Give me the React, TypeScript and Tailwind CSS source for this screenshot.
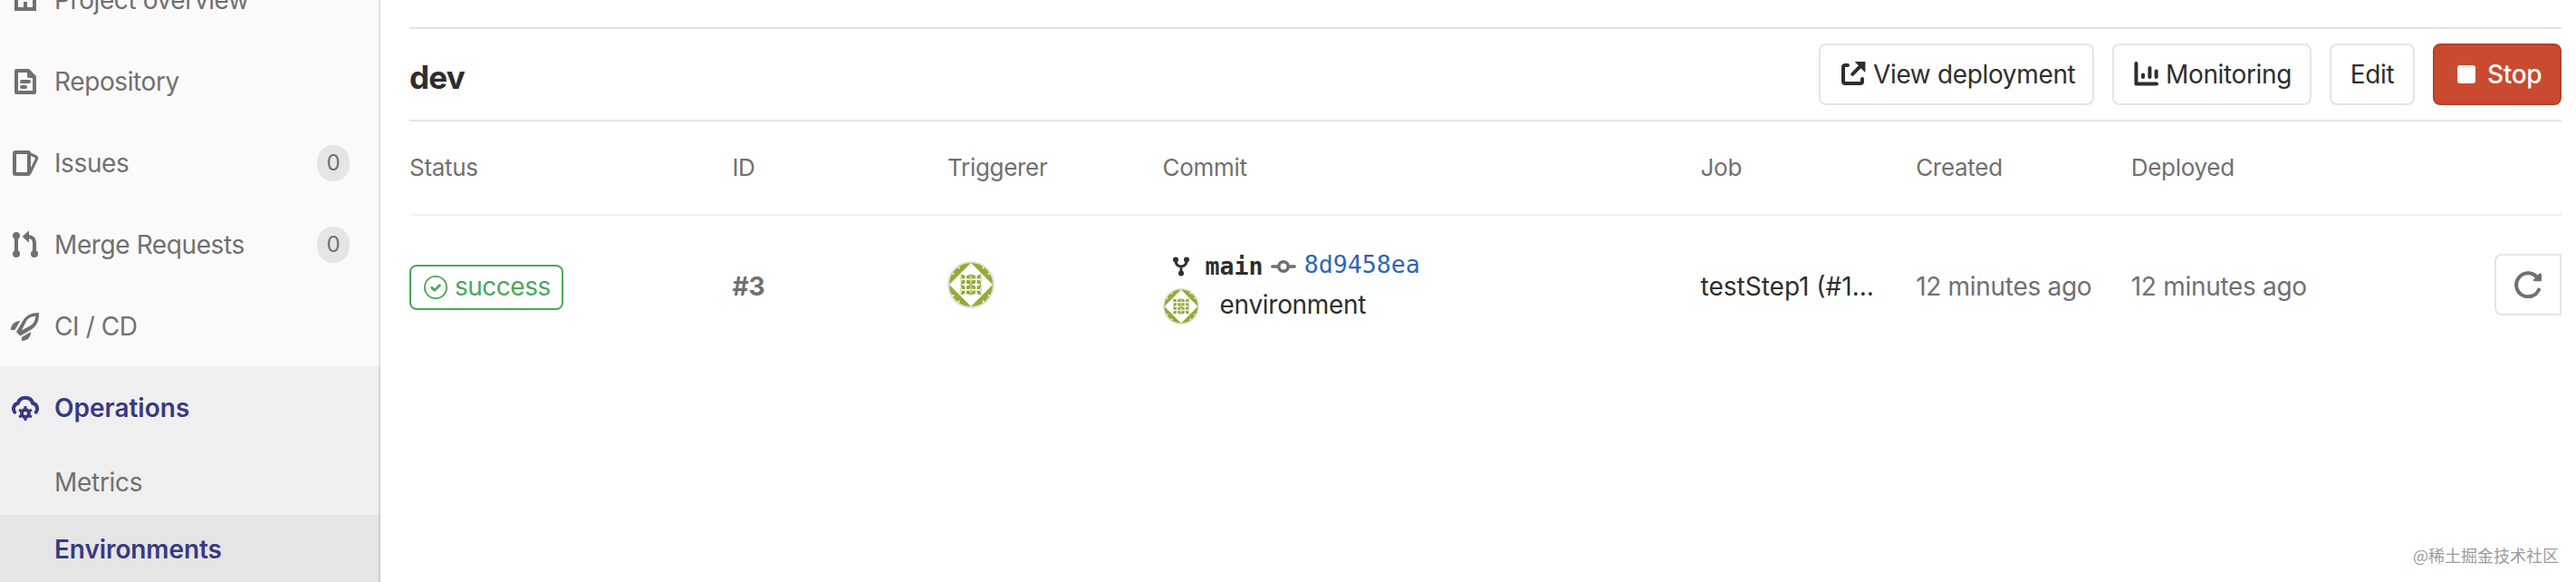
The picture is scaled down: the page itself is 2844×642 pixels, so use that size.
import React from 'react';

interface IconProps {
  className?: string;
}

const HomeIcon: React.FC<IconProps> = ({ className }) => (
  <svg viewBox="0 0 16 16" fill="currentColor" className={className}>
    <path fillRule="evenodd" d="M8 1l7.5 5.5-1 1.6-.5-.3V14H2V7.800l-.5.3-1-1.600zM4 6.300V12h3V9h2v3h3V6.300L8 3.400z" />
  </svg>
);

const DocIcon: React.FC<IconProps> = ({ className }) => (
  <svg viewBox="0 0 16 16" fill="currentColor" className={className}>
    <path fillRule="evenodd" d="M3 1h6.600a1 1 0 0 1 .7.300l3.400 3.400a1 1 0 0 1 .3.700V14a1 1 0 0 1-1 1H3a1 1 0 0 1-1-1V2a1 1 0 0 1 1-1zm1 2v10h8V6h-2a1 1 0 0 1-1-1V3z" />
    <rect x="5" y="7" width="6" height="2" rx="1" />
    <rect x="5" y="10" width="4" height="2" rx="1" />
  </svg>
);

const IssuesIcon: React.FC<IconProps> = ({ className }) => (
  <svg viewBox="0 0 16 16" fill="none" stroke="currentColor" className={className}>
    <rect x="2" y="2" width="8" height="12" rx=".6" strokeWidth="2" />
    <path d="M10.300 2.700l3.500 1.700q.8.500.4 1.300L10.400 13.600" strokeWidth="1.600" />
  </svg>
);

const MergeIcon: React.FC<IconProps> = ({ className }) => (
  <svg viewBox="0 0 16 16" fill="currentColor" className={className}>
    <circle cx="3" cy="3" r="2" />
    <circle cx="3" cy="13" r="2" />
    <circle cx="13" cy="13" r="2" />
    <path d="M2 3h2v10H2zM6.300 3.500L10 .1v6.800z" />
    <path d="M9.500 3.500C12 3.600 13 5 13 7v6" fill="none" stroke="currentColor" strokeWidth="2" />
  </svg>
);

const RocketIcon: React.FC<IconProps> = ({ className }) => (
  <svg viewBox="0 0 16 16" fill="currentColor" className={className}>
    <path fillRule="evenodd" d="M15.500.5C15.700 4.500 14.300 8 11.300 9.700L5.200 13.200 4 12.100 3 11 6.600 5C8.400 1.800 11.500.4 15.500.5zM13.600 2.400C11.300 2.500 9.500 3.400 8.300 5.600L5.900 10.200 10.300 7.900C12.500 6.700 13.500 4.800 13.600 2.400z" />
    <path d="M5.200 5C2 5.100 0 7 0 10h2.200zM11 11c.1 3-1.900 5-5 5v-2z" />
  </svg>
);

const CloudGearIcon: React.FC<IconProps> = ({ className }) => (
  <svg viewBox="0 0 16 16" fill="none" stroke="currentColor" className={className}>
    <path d="M2.100 10.300A3.100 3.100 0 0 1 3.900 5.400 4.300 4.300 0 0 1 12.100 5.400 3.100 3.100 0 0 1 13.900 10.300" strokeWidth="2" strokeLinecap="round" />
    <circle cx="8" cy="11" r="2" strokeWidth="1.900" />
    <path d="M8 7v1.500M8 13.500V15M4.500 9l1.300.75M10.200 12.250l1.300.75M4.500 13l1.300-.75M10.200 9.750l1.300-.75" strokeWidth="1.500" />
  </svg>
);

const ExternalIcon: React.FC<IconProps> = ({ className }) => (
  <svg viewBox="0 0 16 16" fill="none" stroke="currentColor" strokeWidth="2" strokeLinecap="round" strokeLinejoin="round" className={className}>
    <path d="M5 3H3.400a.9.900 0 0 0-.9.900V12a1 1 0 0 0 1 1H12a1 1 0 0 0 1-1v-1.500M7.600 7.900L12.300 3.200" />
    <path d="M8.800 1H14.700V7L12.800 5.200 10.800 3z" fill="currentColor" stroke="none" />
  </svg>
);

const ChartIcon: React.FC<IconProps> = ({ className }) => (
  <svg viewBox="0 0 16 16" fill="none" stroke="currentColor" strokeWidth="2" strokeLinecap="round" strokeLinejoin="round" className={className}>
    <path d="M2.200 2v11.200h11.300M6 8.300v1.200M9.700 4.500v5M13.300 6.200v3.300" />
  </svg>
);

const ForkIcon: React.FC<IconProps> = ({ className }) => (
  <svg viewBox="0 0 18 22" fill="currentColor" className={className}>
    <circle cx="3" cy="3.500" r="3" />
    <circle cx="15" cy="3.500" r="3" />
    <circle cx="9" cy="18.500" r="3" />
    <path d="M3 4c0 4.500 1.800 6.800 6 6.800S15 8.500 15 4M9 10.800V18" fill="none" stroke="currentColor" strokeWidth="2.800" />
  </svg>
);

const CommitIcon: React.FC<IconProps> = ({ className }) => (
  <svg viewBox="0 0 28 14" fill="none" stroke="currentColor" strokeWidth="3.500" strokeLinecap="round" className={className}>
    <circle cx="14" cy="7" r="5.200" />
    <path d="M1.800 7h6M20.200 7h6" />
  </svg>
);

const RetryIcon: React.FC<IconProps> = ({ className }) => (
  <svg viewBox="0 0 30 30" fill="none" stroke="currentColor" strokeWidth="4" strokeLinecap="round" className={className}>
    <path d="M27 20.500A13 13 0 1 1 25.500 7.500" />
    <path d="M30 4v6.500a.8.800 0 0 1-.8.800H22q-2-.6-.6-2.200l6-6.400Q29.600 1.200 30 4z" fill="currentColor" stroke="none" />
  </svg>
);

const SuccessIcon: React.FC<IconProps> = ({ className }) => (
  <svg viewBox="0 0 26 26" fill="none" stroke="currentColor" className={className}>
    <circle cx="13" cy="13" r="12.100" strokeWidth="1.800" />
    <path d="M8.700 13.400l3.100 2.800 5.600-5.400" strokeWidth="2.900" strokeLinecap="round" strokeLinejoin="round" />
  </svg>
);

const tiles = [
  [14.5, 14.5],
  [26, 14.5],
  [14.5, 26],
  [26, 26],
];

const Avatar: React.FC<IconProps> = ({ className }) => (
  <svg viewBox="0 0 52 52" className={className}>
    <circle cx="26" cy="26" r="25" fill="#96aa38" stroke="#e1e1e1" strokeWidth="2" />
    <path d="M26 2l24 24-24 24L2 26z" fill="#fff" />
    <path
      d="M11 6l3 1-1.500 2zM41 6l-3 1 1.500 2zM11 46l3-1-1.500-2zM41 46l-3-1 1.500-2zM5 13l1 2.500 2-2zM47 13l-1 2.500-2-2zM5 39l1-2.500 2 2zM47 39l-1-2.500-2 2z"
      fill="#fff"
    />
    {tiles.map(([x, y]) => (
      <g key={`${x}-${y}`} transform={`translate(${x} ${y})`} fill="#96aa38">
        <path d="M0 0l5 1.600v3.400H1.600zM11.500 0l-5 1.600v3.400h3.400zM0 11.500l5-1.600V6.500H1.600zM11.500 11.500l-5-1.600V6.500h3.400z" />
        <path d="M1 1Q-1 5.750 1 10.500M10.500 1q2 4.750 0 9.500" fill="none" stroke="#96aa38" strokeWidth=".6" />
      </g>
    ))}
  </svg>
);

interface NavItem {
  label: string;
  icon: React.FC<IconProps>;
  count?: number;
}

const navItems: NavItem[] = [
  { label: 'Project overview', icon: HomeIcon },
  { label: 'Repository', icon: DocIcon },
  { label: 'Issues', icon: IssuesIcon, count: 0 },
  { label: 'Merge Requests', icon: MergeIcon, count: 0 },
  { label: 'CI / CD', icon: RocketIcon },
];

const Sidebar: React.FC = () => (
  <aside className="w-[420px] h-full flex-shrink-0 overflow-hidden bg-[#fafafa] text-[28px] leading-none text-[#707070]">
    <nav className="-mt-[45px] flex flex-col">
      {navItems.map(({ label, icon: Icon, count }) => (
        <a key={label} className="flex h-[90px] items-center border-r-2 border-black/10 pl-3 pr-8 last-of-type:h-[89px]">
          <Icon className="mr-4 size-8" />
          <span className="tracking-[-0.4px]">{label}</span>
          {count !== undefined && (
            <span className="ml-auto flex h-10 w-9 items-center justify-center rounded-[18px] bg-[#e5e5e5] text-[24px]">{count}</span>
          )}
        </a>
      ))}
      <div className="bg-[#efefef] font-semibold text-[#393982]">
        <div className="flex h-[92px] items-center border-r-2 border-black/10 pl-3">
          <CloudGearIcon className="mr-4 size-8" />
          Operations
        </div>
        <div className="flex h-[72px] items-center border-r-2 border-black/10 pl-[60px] font-normal tracking-[-0.3px] text-[#707070]">Metrics</div>
        <div className="flex h-[76px] items-center border-r-2 border-black/10 bg-[#e5e5e5] pl-[60px] tracking-[-0.1px]">Environments</div>
      </div>
    </nav>
  </aside>
);

const EnvironmentHeader: React.FC = () => (
  <header className="flex h-[102px] items-center justify-between border-b-2 border-[#e5e5e5] text-[28px] leading-none tracking-[-0.35px] text-[#2e2e2e]">
    <h3 className="pt-[6px] text-[35px] font-bold leading-none tracking-[-0.8px]">dev</h3>
    <div className="flex gap-5">
      <button className="flex h-[68px] w-[304px] items-center rounded-lg border-2 border-[#e5e5e5] pl-5">
        <ExternalIcon className="mr-[6px] size-8" />
        View deployment
      </button>
      <button className="flex h-[68px] w-[220px] items-center rounded-lg border-2 border-[#e5e5e5] pl-5">
        <ChartIcon className="mr-[5px] size-8" />
        Monitoring
      </button>
      <button className="flex h-[68px] w-[94px] items-center justify-center rounded-lg border-2 border-[#e5e5e5]">Edit</button>
      <button className="flex h-[68px] w-[142px] items-center rounded-lg border-2 border-[#b53f2a] bg-[#c94a30] pl-[25px] font-medium text-white">
        <span className="mr-[13px] size-5 rounded-[3px] bg-white" />
        Stop
      </button>
    </div>
  </header>
);

const DeploymentTable: React.FC = () => (
  <section className="text-[28px] leading-none tracking-[-0.3px] text-[#707070]">
    <div className="flex h-[104px] items-center border-b-2 border-[#f0f0f0] text-[26px]">
      <div className="w-[15%]">Status</div>
      <div className="w-[10%]">ID</div>
      <div className="w-[10%]">Triggerer</div>
      <div className="w-[25%]">Commit</div>
      <div className="w-[10%]">Job</div>
      <div className="w-[10%]">Created</div>
      <div className="w-[10%]">Deployed</div>
    </div>
    <div className="flex h-[158px] items-center">
      <div className="w-[15%]">
        <span className="inline-flex h-[50px] w-[170px] items-center rounded-lg border-2 border-[#4da65a] pl-[14px] align-middle tracking-[-0.5px] text-[#4da65a]">
          <SuccessIcon className="mr-2 size-[26px]" />
          <span className="pb-[2px]">success</span>
        </span>
      </div>
      <div className="w-[10%] pb-[3px] font-bold tracking-normal">#3</div>
      <div className="w-[10%] pb-[6px]">
        <Avatar className="size-[52px]" />
      </div>
      <div className="flex w-[25%] flex-col gap-[6px] text-[#2e2e2e]">
        <div className="flex h-9 items-center font-['DejaVu_Sans_Mono',monospace] text-[26.600px] tracking-normal">
          <ForkIcon className="ml-[11px] mr-[18px] h-[22px] w-[18px]" />
          <span className="font-bold">main</span>
          <CommitIcon className="ml-[8px] mr-[9px] h-[14px] w-7 text-[#707070]" />
          <span className="pb-[3px] text-[#2e66b5]">8d9458ea</span>
        </div>
        <div className="flex h-10 items-center">
          <Avatar className="mr-[23px] size-10" />
          <span className="pb-[4px]">environment</span>
        </div>
      </div>
      <div className="w-[10%] whitespace-nowrap pb-[3px] tracking-normal text-[#2e2e2e]">testStep1 (#1...</div>
      <div className="w-[10%] whitespace-nowrap pb-[3px]">12 minutes ago</div>
      <div className="w-[10%] whitespace-nowrap pb-[3px]">12 minutes ago</div>
      <div className="flex w-[10%] justify-end pb-[6px]">
        <button className="flex h-[68px] w-[74px] items-center justify-center rounded-l-lg border-2 border-[#e5e5e5]">
          <RetryIcon className="size-[30px]" />
        </button>
      </div>
    </div>
  </section>
);

const App: React.FC = () => (
  <div className="relative flex h-[642px] w-[2844px] overflow-hidden bg-white font-['Inter','Noto_Sans_CJK_SC',sans-serif]">
    <Sidebar />
    <main className="flex-1 pl-8 pr-4 pt-[30px]">
      <div className="border-t-2 border-[#e5e5e5]">
        <EnvironmentHeader />
        <DeploymentTable />
      </div>
    </main>
    <span className="absolute bottom-[18px] right-[19px] font-['Noto_Sans_CJK_SC',sans-serif] text-[18px] leading-6 text-[#9a9a9a]">@稀土掘金技术社区</span>
  </div>
);

export default App;
